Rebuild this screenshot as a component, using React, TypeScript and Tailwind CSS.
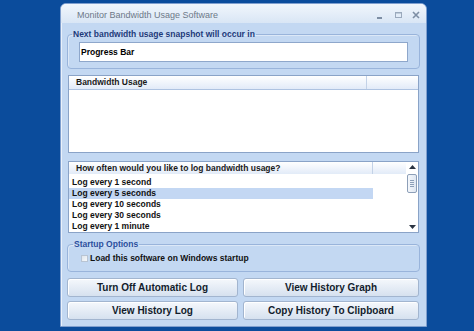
const items = [
  "Log every 1 second",
  "Log every 5 seconds",
  "Log every 10 seconds",
  "Log every 30 seconds",
  "Log every 1 minute",
];

function Btn({ label, w }: { label: string; w: string }) {
  return (
    <div
      className={`${w} h-[19px] flex items-center justify-center rounded-[3px] border border-[#a2b5cf] bg-gradient-to-b from-[#f5f8fc] to-[#d6e1ef] shadow-[inset_1px_1px_0_#ffffff] text-[10px] font-bold text-[#121c2c]`}
    >
      {label}
    </div>
  );
}

export default function App() {
  return (
    <div className="w-[474px] h-[331px] overflow-hidden bg-[#0b4c9c] pl-[60px] pt-[3px] font-['Liberation_Sans',Arial,sans-serif]">
      <div className="w-[367px] h-[324px] flex flex-col rounded-t-[6px] border border-[#7f9fcf] bg-[#c3d8f2] shadow-[inset_1px_1px_0_#eaf1fa]">
        {/* title bar */}
        <div className="h-[19px] shrink-0 flex items-center pt-[2px] pl-[16px] pr-[6px] rounded-t-[5px] bg-gradient-to-b from-[#f1f6fc] to-[#d9e6f5]">
          <span className="flex-1 text-[9px] leading-[10px] text-[#6d7988]">
            Monitor Bandwidth Usage Software
          </span>
          <div className="flex items-center gap-[10px]">
            <svg width="8" height="8" viewBox="0 0 8 8">
              <rect x="1" y="6" width="5" height="2" fill="#7d8ea4" />
            </svg>
            <svg width="8" height="8" viewBox="0 0 8 8">
              <rect x="1.5" y="1.5" width="6" height="5" fill="none" stroke="#9aa9bc" strokeWidth="1" />
              <rect x="1" y="1" width="7" height="1.5" fill="#9aa9bc" />
            </svg>
            <svg width="8" height="8" viewBox="0 0 8 8">
              <path d="M1 1 L7 7 M7 1 L1 7" stroke="#7d8ea4" strokeWidth="1.6" />
            </svg>
          </div>
        </div>

        <div className="flex flex-col px-[6px]">
          {/* group 1 */}
          <fieldset className="mt-[6px] rounded-[4px] border border-[#99b4db] shadow-[inset_1px_1px_0_#dce8f7] px-[4px] pb-[6px]">
            <legend className="px-[1px] text-[8.5px] leading-[10px] font-bold text-[#1d3a7a]">
              Next bandwidth usage snapshot will occur in
            </legend>
            <div className="mx-[7px] mt-[3px] h-[20px] flex items-center border border-[#8ea7cb] bg-white pl-[1px] text-[8.5px] font-bold text-black">
              Progress Bar
            </div>
          </fieldset>

          {/* bandwidth usage list */}
          <div className="mt-[6px] mx-[1px] h-[78px] flex flex-col border border-[#8aa3c7] bg-white">
            <div className="h-[14px] shrink-0 flex border-b border-[#aec3e1] bg-gradient-to-b from-[#ffffff] to-[#e2ebf8]">
              <div className="w-[298px] flex items-center border-r border-[#c3d2e7] pl-[7px] text-[8.5px] font-bold text-[#1a1a1a]">
                Bandwidth Usage
              </div>
              <div className="flex-1" />
            </div>
          </div>

          {/* log options list */}
          <div className="mt-[8px] mx-[1px] h-[72px] flex border border-[#8aa3c7] bg-white overflow-hidden">
            <div className="flex-1 flex flex-col">
              <div className="h-[12px] shrink-0 flex bg-gradient-to-b from-[#ffffff] to-[#e2ebf8]">
                <div className="w-[304px] flex items-center border-r border-[#c3d2e7] pl-[7px] text-[8.5px] font-bold text-[#1a1a1a]">
                  How often would you like to log bandwidth usage?
                </div>
                <div className="flex-1" />
              </div>
              <div className="pt-[3px] flex flex-col">
                {items.map((t, i) => (
                  <div
                    key={t}
                    className={`w-[304px] h-[11px] leading-[11px] pl-[3px] text-[8.5px] font-bold text-[#111111] ${
                      i === 1 ? "bg-[#c3d7f3]" : ""
                    }`}
                  >
                    {t}
                  </div>
                ))}
              </div>
            </div>
            <div className="w-[12px] shrink-0 flex flex-col items-center pb-[1px]">
              <div className="h-[9px] flex items-center justify-center">
                <svg width="7" height="4" viewBox="0 0 7 4">
                  <path d="M0 4 L3.5 0 L7 4 Z" fill="#2b3442" />
                </svg>
              </div>
              <div className="mt-[3px] w-[10px] h-[19px] rounded-[2px] border border-[#8d9fb8] bg-gradient-to-r from-[#f4f7fb] to-[#dfe7f2] flex flex-col items-center justify-center gap-[1px]">
                <div className="w-[4px] h-[1px] bg-[#8d9fb8]" />
                <div className="w-[4px] h-[1px] bg-[#8d9fb8]" />
                <div className="w-[4px] h-[1px] bg-[#8d9fb8]" />
                <div className="w-[4px] h-[1px] bg-[#8d9fb8]" />
              </div>
              <div className="flex-1" />
              <div className="h-[9px] flex items-center justify-center">
                <svg width="7" height="4" viewBox="0 0 7 4">
                  <path d="M0 0 L7 0 L3.5 4 Z" fill="#2b3442" />
                </svg>
              </div>
            </div>
          </div>

          {/* startup options */}
          <fieldset className="mt-[6px] rounded-[4px] border border-[#99b4db] shadow-[inset_1px_1px_0_#dce8f7] px-[5px] pb-[7px]">
            <legend className="px-[1px] text-[8.5px] leading-[10px] font-bold text-[#2a4e9d]">
              Startup Options
            </legend>
            <div className="mt-[4px] h-[11px] flex items-center pl-[8px] gap-[2px]">
              <div className="w-[7px] h-[7px] border border-[#b8c4d3] bg-gradient-to-br from-[#dfe5ec] to-[#f6f8fb]" />
              <span className="text-[8.5px] font-bold text-[#111111]">
                Load this software on Windows startup
              </span>
            </div>
          </fieldset>

          {/* buttons */}
          <div className="mt-[6px] flex flex-col gap-[4px]">
            <div className="flex gap-[5px]">
              <Btn label="Turn Off Automatic Log" w="w-[171px]" />
              <Btn label="View History Graph" w="w-[176px]" />
            </div>
            <div className="flex gap-[5px]">
              <Btn label="View History Log" w="w-[171px]" />
              <Btn label="Copy History To Clipboard" w="w-[176px]" />
            </div>
          </div>
        </div>
      </div>
    </div>
  );
}
